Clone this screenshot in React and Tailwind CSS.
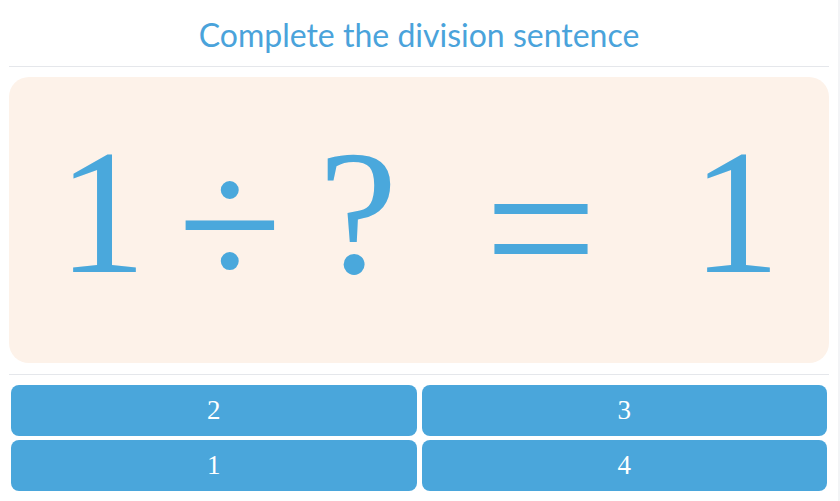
import React from 'react';

const serif = { fontFamily: '"Liberation Serif", "Times New Roman", serif' };

export default function App() {
  const answers = ['2', '3', '1', '4'];

  return (
    <div className="w-[840px] h-[501px] bg-white border-r-2 border-gray-100 overflow-hidden">
      <div className="px-[9px]">
        <h1 className="h-[67px] flex items-center justify-center text-[32px] text-[#4aa3db] font-['Lato','Open_Sans',sans-serif] border-b border-gray-200 pt-1">
          Complete the division sentence
        </h1>

        {/* equation */}
        <div className="mt-[10px] h-[286px] rounded-[20px] bg-[#fdf2e9] flex items-start text-[#4aa8dc] leading-none pl-[29px]" style={serif}>
          <span className="w-[128px] mt-[46px] text-center text-[178px]">1</span>
          <span className="w-[128px] mt-[53px] text-center text-[190px]">÷</span>
          <span className="w-[128px] mt-[46px] text-center text-[178px]">?</span>
          <span className="w-[238px] mt-[51px] text-center text-[200px]">=</span>
          <span className="w-[152px] mt-[46px] text-center text-[178px]">1</span>
        </div>

        <div className="mt-[11px] border-t border-gray-200 pt-[10px] px-[2px] grid grid-cols-2 gap-x-[5px] gap-y-[4px]">
          {answers.map((a) => (
            <button
              key={a}
              className="h-[51px] rounded-[8px] bg-[#4aa6db] text-white text-[27px] flex items-center justify-center"
              style={serif}
            >
              {a}
            </button>
          ))}
        </div>
      </div>
    </div>
  );
}
